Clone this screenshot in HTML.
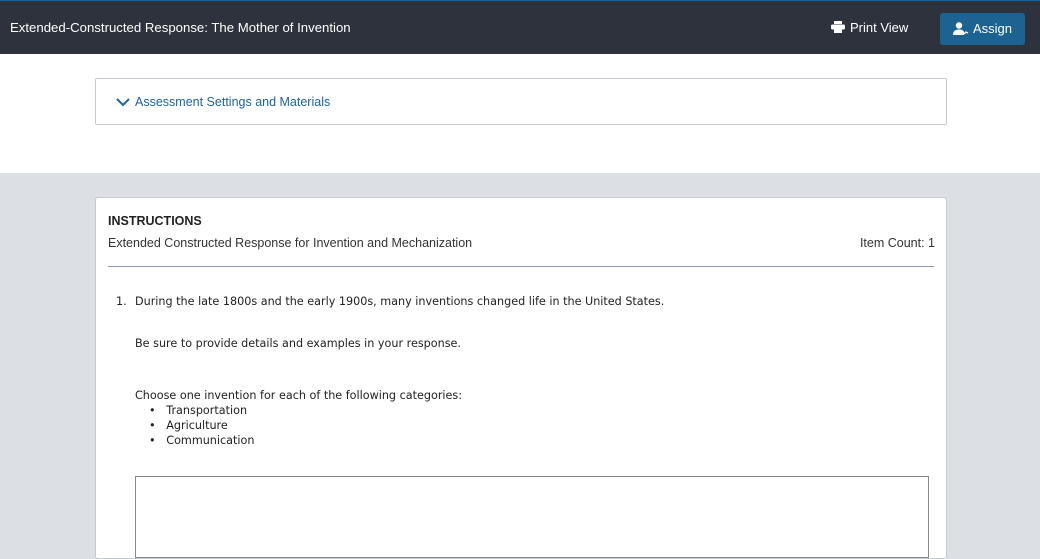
<!DOCTYPE html>
<html><head><style>
body{margin:0;width:1040px;height:539px;overflow:hidden;font-family:"Liberation Sans",sans-serif;background:#dcdfe3;}
.top{position:absolute;left:0;top:0;width:1040px;height:54px;background:#2e323c;border-top:1px solid #1a5e99;box-sizing:border-box;color:#fff;}
.title{position:absolute;left:10px;top:19px;font-size:13.2px;}
.pv{position:absolute;left:830px;top:19px;font-size:13px;}
.as{position:absolute;left:940px;top:12px;width:85px;height:32px;background:#1c6391;border-radius:3px;font-size:13px;}
.white{position:absolute;left:0;top:54px;width:1040px;height:119px;background:#fff;}
.acc{position:absolute;left:95px;top:24px;width:850px;height:45px;border:1px solid #c4c8d0;border-radius:2px;color:#1c63a0;font-size:12.5px;}
.card{position:absolute;left:95px;top:197px;width:850px;height:360px;background:#fff;border:1px solid #c4c8d0;border-radius:3px;}
.q{font-family:"DejaVu Sans",sans-serif;font-size:11.2px;color:#222;position:absolute;}
</style></head><body>
<div class="top">
<div class="title">Extended-Constructed Response: The Mother of Invention</div>
<div class="pv"><svg width="16" height="12" viewBox="0 0 16 12" style="vertical-align:-1px;margin-right:4px"><rect x="4" y="0" width="8" height="3" fill="#fff"/><rect x="1" y="3.5" width="14" height="5" rx="1.5" fill="#fff"/><rect x="4" y="8" width="8" height="4" fill="#fff"/></svg>Print View</div>
<div class="as"><svg width="16" height="14" viewBox="0 0 16 14" style="position:absolute;left:13px;top:9px"><circle cx="6" cy="3.5" r="3.2" fill="#fff"/><path d="M0 13 Q0 7.5 6 7.5 Q10 7.5 11 10 L11 13Z" fill="#fff"/><path d="M11 12 l2 -2 l2 1" stroke="#fff" stroke-width="1.3" fill="none"/></svg><span style="position:absolute;left:33px;top:8px">Assign</span></div>
</div>
<div class="white"><div class="acc"><svg width="14" height="10" viewBox="0 0 14 10" style="position:absolute;left:20px;top:18px"><path d="M1 2 L7 8 L13 2" stroke="#1c63a0" stroke-width="2" fill="none"/></svg><span style="position:absolute;left:39px;top:16px">Assessment Settings and Materials</span></div></div>
<div class="card">
<div style="position:absolute;left:12px;top:16px;font-size:12.5px;font-weight:bold;color:#222">INSTRUCTIONS</div>
<div style="position:absolute;left:12px;top:38px;font-size:12.5px;color:#333">Extended Constructed Response for Invention and Mechanization</div>
<div style="position:absolute;right:11px;top:38px;font-size:12.5px;color:#333">Item Count: 1</div>
<div style="position:absolute;left:12px;top:68px;width:826px;height:1px;background:#8f9bab"></div>
<div class="q" style="left:20px;top:97px">1.</div>
<div class="q" style="left:39px;top:97px">During the late 1800s and the early 1900s, many inventions changed life in the United States.</div>
<div class="q" style="left:39px;top:139px">Be sure to provide details and examples in your response.</div>
<div class="q" style="left:39px;top:190px;line-height:15px">Choose one invention for each of the following categories:<br>
<span style="padding-left:14px">•&nbsp;&nbsp; Transportation</span><br><span style="padding-left:14px">•&nbsp;&nbsp; Agriculture</span><br><span style="padding-left:14px">•&nbsp;&nbsp; Communication</span></div>
<div style="position:absolute;left:39px;top:278px;width:792px;height:80px;border:1px solid #888"></div>
</div>
</body></html>
